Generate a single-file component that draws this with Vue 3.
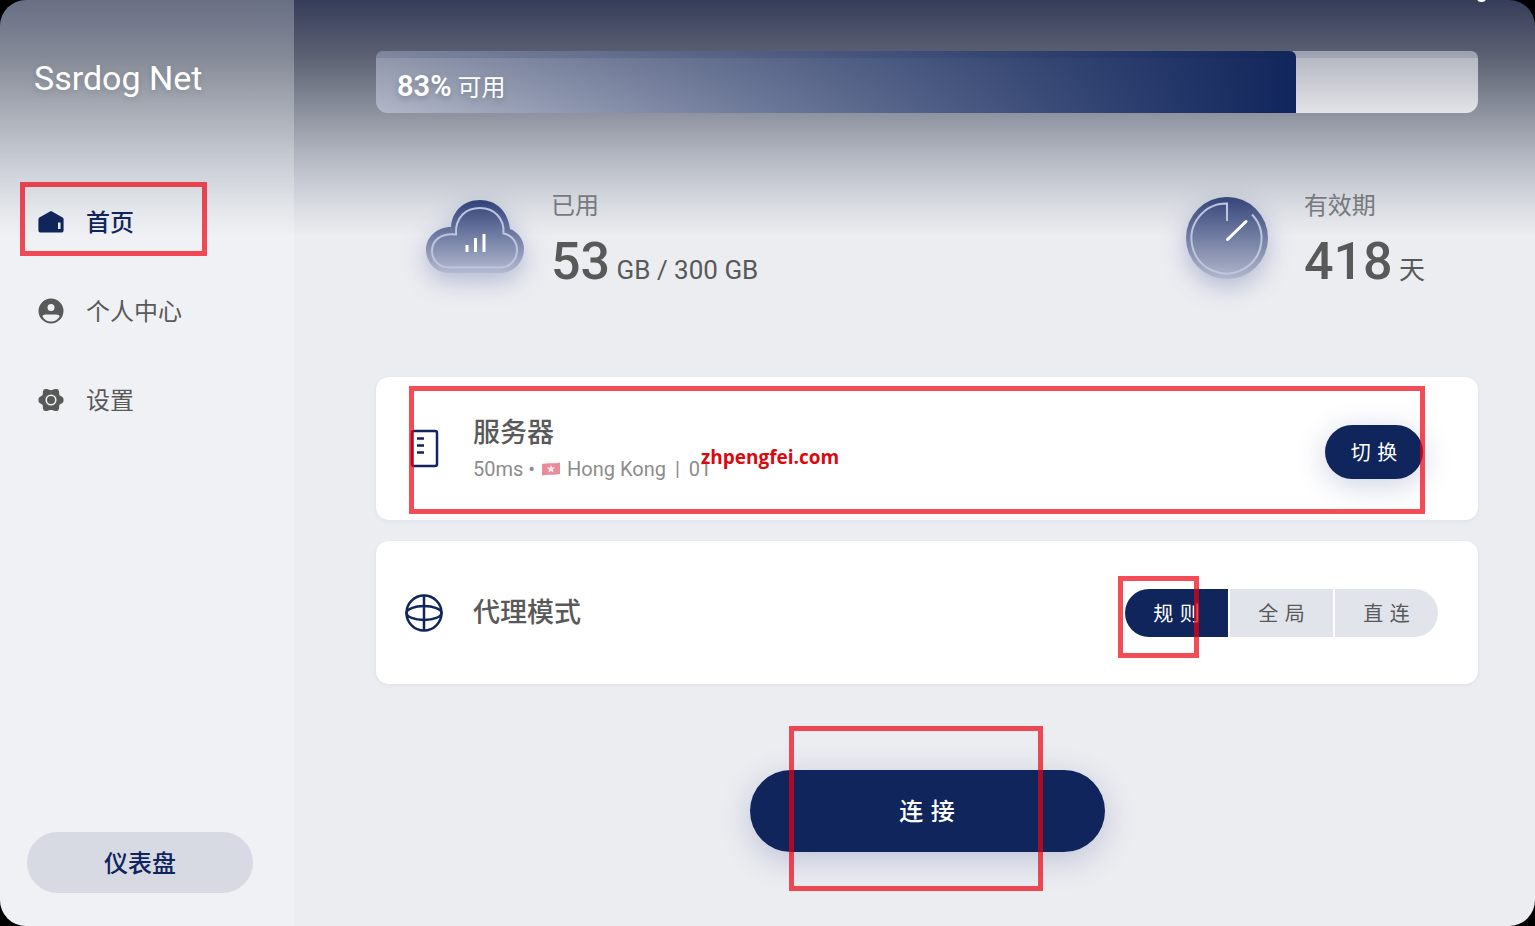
<script setup>
import { reactive } from "vue";

const state = reactive({
    page: "home",
    mode: "rule",
    available: 83,
    fill: 83.5,
});

const menu = [
    { key: "home", title: "首页" },
    { key: "user", title: "个人中心" },
    { key: "settings", title: "设置" },
];

const modes = [
    { key: "rule", title: "规 则" },
    { key: "global", title: "全 局" },
    { key: "direct", title: "直 连" },
];

function openPage(key) {
    state.page = key;
}

function setMode(key) {
    state.mode = key;
}
</script>
<template>
    <div class="window">
        <aside class="sidebar">
            <h1 class="brand">Ssrdog Net</h1>
            <nav class="menu">
                <div v-for="item in menu" :key="item.key" class="menu-row">
                    <a
                        href="#"
                        class="menu-link"
                        :class="{ active: state.page === item.key }"
                        @click.prevent="openPage(item.key)"
                    >
                        <svg v-if="item.key === 'home'" class="menu-icon" viewBox="0 0 26 26">
                            <path
                                fill="currentColor"
                                fill-rule="evenodd"
                                d="M12 2.400a2 2 0 0 1 2 0l10.600 6.200a2 2 0 0 1 1 1.700V21a2.600 2.600 0 0 1-2.600 2.600H3A2.600 2.600 0 0 1 .4 21V10.300a2 2 0 0 1 1-1.700zM20 13.500V20h2.500v-6.500z"
                            />
                        </svg>
                        <svg v-else-if="item.key === 'user'" class="menu-icon" viewBox="0 0 26 26">
                            <path
                                fill="currentColor"
                                fill-rule="evenodd"
                                d="M13 .5a12.500 12.500 0 1 1 0 25a12.500 12.500 0 0 1 0-25zM13 6a3.500 3.500 0 1 0 0 7a3.500 3.500 0 0 0 0-7zM4.500 18.500c1.500 3 4.700 5 8.500 5s7-2 8.500-5q0-2-3.500-2H8q-3.500 0-3.500 2z"
                            />
                        </svg>
                        <svg v-else class="menu-icon" viewBox="0 0 26 26">
                            <path
                                fill="currentColor"
                                stroke="currentColor"
                                stroke-width="5"
                                stroke-linejoin="round"
                                d="M23 12v2L19 16.500 18.500 21.500H17L13 20 9 21.500H7.500L7 16.500 3 14v-2L7 9.500 7.500 4.500H9L13 6 17 4.500H18.500L19 9.500z"
                            />
                            <circle cx="13" cy="13" r="4.800" fill="none" stroke="#f0f1f5" stroke-width="1.600" />
                        </svg>
                        <span class="menu-title">{{ item.title }}</span>
                    </a>
                    <span v-if="item.key === 'home'" class="frame frame-home"></span>
                </div>
            </nav>
            <button class="dashboard">仪表盘</button>
        </aside>
        <main class="content">
            <span class="handle"></span>
            <div class="traffic">
                <div class="traffic-fill" :style="{ width: state.fill + '%' }"></div>
                <div class="traffic-text"><b>{{ state.available }}%</b> 可用</div>
            </div>
            <div class="stats">
                <div class="stat">
                    <svg class="stat-icon cloud" viewBox="0 0 98 73">
                        <defs>
                            <linearGradient id="cloudFill" x1="0" y1="0" x2="0" y2="1">
                                <stop offset="0" stop-color="#304279" />
                                <stop offset="1" stop-color="#b4b9cf" />
                            </linearGradient>
                        </defs>
                        <path
                            fill="url(#cloudFill)"
                            d="M24 73a23 23 0 0 1-24-23c0-13 11-23 25-23C26 11 38 0 54 0s28 11 30 29c8 3 14 11 14 20a24 24 0 0 1-24 24z"
                        />
                        <path
                            fill="none"
                            stroke="#bdc5df"
                            stroke-width="2"
                            d="M23 67.500C13 67.500 6 60 6 51c0-11 9-18 24-16.500C29 17 40 8 54 8s24.500 10 23.500 25.500C86 35 91 42 91 50c0 10-7 17.500-17 17.500z"
                        />
                        <path fill="none" stroke="#fff" stroke-width="3" d="M41 45v7M49.500 38v14M58 34v18" />
                    </svg>
                    <div class="stat-body">
                        <div class="stat-label">已用</div>
                        <div class="stat-value"><b>53</b> GB / 300 GB</div>
                    </div>
                </div>
                <div class="stat">
                    <svg class="stat-icon clock" viewBox="0 0 82 82">
                        <defs>
                            <linearGradient id="clockFill" x1="0" y1="0" x2="0" y2="1">
                                <stop offset="0" stop-color="#344579" />
                                <stop offset="1" stop-color="#b2b7cc" />
                            </linearGradient>
                        </defs>
                        <circle cx="41" cy="41" r="41" fill="url(#clockFill)" />
                        <path
                            fill="none"
                            stroke="#bdc5df"
                            stroke-width="2"
                            d="M41 24V6.500a35 35 0 1 0 25 11"
                        />
                        <path stroke="#fff" stroke-width="3" stroke-linecap="round" d="M41.500 42.500 60 24.500" />
                    </svg>
                    <div class="stat-body">
                        <div class="stat-label">有效期</div>
                        <div class="stat-value"><b>418</b> 天</div>
                    </div>
                </div>
            </div>
            <section class="card card-server">
                <svg class="card-icon" viewBox="0 0 40 40" fill="none" stroke="#10255c">
                    <rect x="8" y="2" width="25" height="35" rx="2" stroke-width="2.500" />
                    <path stroke-width="2.500" d="M13 9.500h7M13 16.500h7M13 23.500h7" />
                </svg>
                <div class="card-body">
                    <h2 class="card-title">服务器</h2>
                    <div class="card-note">
                        <span>50ms •</span>
                        <svg class="flag" viewBox="0 0 18 14">
                            <path fill="#ea8b9b" d="M0 2q4.500-1 9-.7t9-.8v11.500q-4.500 1-9 .7t-9 .8z" />
                            <path
                                fill="#fff"
                                fill-opacity="0.8"
                                d="m9 2.800 1.200 2.600 2.900.2-2.200 1.900.7 2.900L9 8.900l-2.600 1.500.7-2.900-2.200-1.900 2.900-.2z"
                            />
                        </svg>
                        <span>Hong Kong<span class="divider">|</span>01</span>
                    </div>
                </div>
                <button class="switch">切 换</button>
                <span class="frame frame-server"></span>
                <span class="watermark">zhpengfei.com</span>
            </section>
            <section class="card card-mode">
                <svg class="card-icon" viewBox="0 0 40 40" fill="none" stroke="#10255c" stroke-width="2.500">
                    <circle cx="20" cy="20" r="17.500" />
                    <path d="M20 2.500v35" />
                    <ellipse cx="20" cy="20" rx="17.500" ry="7" />
                </svg>
                <h2 class="card-title card-body">代理模式</h2>
                <div class="modes">
                    <button
                        v-for="mode in modes"
                        :key="mode.key"
                        class="mode"
                        :class="{ selected: state.mode === mode.key }"
                        @click="setMode(mode.key)"
                    >
                        {{ mode.title }}
                    </button>
                    <span class="frame frame-mode"></span>
                </div>
            </section>
            <div class="connect-row">
                <button class="connect">连 接</button>
                <span class="frame frame-connect"></span>
            </div>
        </main>
    </div>
</template>
<style>
body {
    background: #000;
}
</style>
<style scoped>
.window {
    display: flex;
    min-height: 100vh;
    border-radius: 26px;
    overflow: hidden;
    background: linear-gradient(#363d5a 0, #5b6072 55px, #8f94a0 115px, #b6bac4 160px, #d8dbe1 205px, #ecedf1 236px);
    color: #595959;
    font-family: Roboto, "Noto Sans CJK SC", sans-serif;
}

button {
    border: none;
    padding: 0;
    font-family: "DejaVu Sans", "Noto Sans CJK SC", sans-serif;
    cursor: pointer;
}

.sidebar {
    display: flex;
    flex-direction: column;
    flex: none;
    box-sizing: border-box;
    width: 294px;
    padding: 56px 41px 33px 27px;
    background: rgba(252, 254, 255, 0.26);
}

.brand {
    margin: 0 0 77px 7px;
    color: #fff;
    font-size: 34px;
    font-weight: 400;
    line-height: 44px;
    text-shadow: 0 2px 6px rgba(0, 0, 0, 0.15);
}

.menu {
    flex: 1;
}

.menu-row {
    position: relative;
}

.menu-link {
    display: flex;
    align-items: center;
    gap: 22px;
    height: 89px;
    padding-left: 11px;
    color: #595959;
    font-size: 24px;
    text-decoration: none;
}

.menu-link.active {
    color: #10255c;
    font-weight: 500;
}

.menu-icon {
    width: 26px;
    height: 26px;
}

.menu-title {
    padding-bottom: 3px;
}

.dashboard {
    height: 61px;
    padding-bottom: 3px;
    border-radius: 31px;
    background: #d7dae3;
    color: #10255c;
    font-size: 24px;
    font-weight: 500;
}

.content {
    position: relative;
    flex: 1;
    padding: 51px 57px 70px 82px;
}

.handle {
    position: absolute;
    top: -6px;
    right: 49px;
    width: 9px;
    height: 8px;
    border-radius: 4px;
    background: #fff;
}

.traffic {
    position: relative;
    height: 62px;
    border-radius: 7px 7px 12px 12px;
    overflow: hidden;
    background: linear-gradient(#b0b3bd, #e2e3e7);
}

.traffic::after {
    content: "";
    position: absolute;
    inset: 0 0 auto;
    height: 7px;
    background: rgba(16, 37, 92, 0.12);
}

.traffic-fill {
    height: 100%;
    border-top-right-radius: 6px;
    background: linear-gradient(100deg, rgba(16, 37, 92, 0.22), #10255c);
}

.traffic-text {
    position: absolute;
    top: 0;
    left: 21px;
    color: #fff;
    font-size: 24px;
    line-height: 70px;
    text-shadow: 0 3px 6px rgba(0, 0, 0, 0.2);
}

.traffic-text b {
    font-size: 29px;
    font-weight: 600;
}

.stats {
    display: flex;
    justify-content: space-between;
    padding: 76px 53px 85px 50px;
}

.stat {
    display: flex;
}

.stat-icon {
    margin-top: 8px;
    overflow: visible;
    filter: drop-shadow(0 8px 12px rgba(48, 66, 140, 0.3));
}

.cloud {
    width: 98px;
    height: 79px;
    margin-right: 27px;
}

.clock {
    width: 82px;
    height: 82px;
    margin-right: 36px;
}

.stat-label {
    color: #77797e;
    font-size: 24px;
    line-height: 34px;
}

.stat-value {
    height: 69px;
    font-size: 26px;
    line-height: 77px;
}

.stat-value b {
    font-size: 52px;
    font-weight: 500;
}

.card {
    position: relative;
    display: flex;
    align-items: center;
    gap: 29px;
    height: 143px;
    margin-bottom: 21px;
    padding-left: 28px;
    border-radius: 13px;
    background: #fff;
    box-shadow: 0 1px 4px rgba(16, 37, 92, 0.06);
}

.card-server {
    padding-right: 55px;
}

.card-mode {
    padding-right: 40px;
}

.card-icon {
    width: 40px;
    height: 40px;
}

.card-body {
    flex: 1;
}

.card-title {
    margin: 0;
    font-size: 27px;
    font-weight: 500;
    line-height: 40px;
}

.card-note {
    display: flex;
    align-items: center;
    gap: 7px;
    color: #8c8c8c;
    font-size: 20px;
    line-height: 32px;
}

.divider {
    margin: 0 9px;
}

.flag {
    width: 18px;
    height: 14px;
}

.switch {
    width: 98px;
    height: 54px;
    margin-top: 6px;
    border-radius: 27px;
    background: #10255c;
    color: #fff;
    font-size: 20px;
    box-shadow: 0 6px 30px rgba(48, 66, 140, 0.24);
}

.modes {
    position: relative;
    display: flex;
    gap: 2px;
}

.mode {
    width: 103px;
    height: 48px;
    background: #e1e4eb;
    color: #595959;
    font-size: 20px;
}

.mode:first-child {
    border-radius: 24px 0 0 24px;
}

.mode:nth-child(3) {
    border-radius: 0 24px 24px 0;
}

.mode.selected {
    background: #10255c;
    color: #fff;
}

.connect-row {
    position: relative;
    width: 355px;
    margin: 86px auto 0;
}

.connect {
    width: 100%;
    height: 82px;
    padding-bottom: 3px;
    border-radius: 41px;
    background: #10255c;
    color: #fff;
    font-size: 24px;
    font-weight: 500;
    box-shadow: 0 8px 32px rgba(48, 66, 140, 0.24);
}

.frame {
    position: absolute;
    box-sizing: border-box;
    border: 5px solid rgba(240, 0, 16, 0.7);
    pointer-events: none;
}

.frame-home {
    top: 5px;
    left: -7px;
    width: 187px;
    height: 74px;
}

.frame-server {
    inset: 9px 53px 6px 33px;
}

.frame-mode {
    top: -13px;
    left: -7px;
    width: 81px;
    height: 82px;
}

.frame-connect {
    top: -44px;
    left: 39px;
    width: 254px;
    height: 165px;
}

.watermark {
    position: absolute;
    top: 68px;
    left: 325px;
    color: #d9090d;
    font-family: "Open Sans", sans-serif;
    font-size: 19px;
    font-weight: 700;
    line-height: 24px;
}
</style>
